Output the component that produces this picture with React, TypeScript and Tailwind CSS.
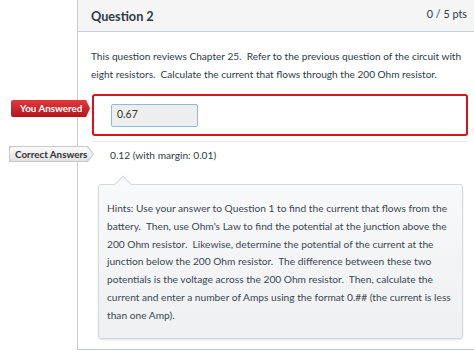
import React from "react";

export default function App() {
  return (
    <div className="w-[474px] h-[351px] overflow-hidden bg-white font-['Lato','Liberation_Sans',sans-serif] text-[#2d3b45]">
      <div className="ml-[77px] border-l border-b border-[#c7cdd1] pb-[10px]">
        <div className="h-[32px] bg-[#f5f5f5] border-b border-[#c7cdd1] flex items-start justify-between pl-[13px] pr-[7px]">
          <div className="text-[12.7px] font-bold leading-[32px] text-[#2d3b45]">Question 2</div>
          <div className="text-[10.8px] leading-[27px] text-[#2d3b45]">0 / 5 pts</div>
        </div>
        <div className="pt-[16px] pl-[13px] pr-0 text-[10.1px] leading-[17.5px] text-[#2d3b45]">
          This question reviews Chapter 25.&nbsp; Refer to the previous question of the circuit with eight resistors.&nbsp; Calculate the current that flows through the 200 Ohm resistor.
        </div>
        <div className="mt-[11px] mx-[14px] pb-[5px] border-b border-[#e3e8ee] w-[376px]">
          <div className="relative h-[42px] border-2 border-[#d7141d] rounded-[3px] flex items-center pl-[17px]">
            <div className="absolute left-[-83px] top-[4px] h-[17px] w-[79px] flex items-center pl-[9px] whitespace-nowrap bg-gradient-to-b from-[#e2383f] to-[#b3141b] text-white text-[9.8px] font-bold [clip-path:polygon(0_0,75px_0,79px_50%,75px_100%,0_100%)] rounded-l-[2px]">
              You Answered
            </div>
            <div className="w-[87px] h-[23px] bg-[#eeeeee] border border-[#8fb8e0] rounded-[2px] flex items-center pl-[5px] text-[10.5px] text-[#333]">
              0.67
            </div>
          </div>
        </div>
        <div className="relative h-[27px] flex items-center pl-[32px] text-[10.2px] text-[#2d3b45]">
          <div className="absolute left-[-69px] top-[4px] h-[16px] w-[85px] [clip-path:polygon(0_0,79px_0,85px_50%,79px_100%,0_100%)] bg-[#c9c9c9]">
            <div className="absolute inset-[1px] [clip-path:polygon(0_0,77px_0,83px_50%,77px_100%,0_100%)] bg-gradient-to-b from-[#fbfbfb] to-[#e2e2e2] flex items-center pl-[5px] whitespace-nowrap text-[9.8px] font-bold text-[#333] rounded-l-[2px]">
              Correct Answers
            </div>
          </div>
          0.12 (with margin: 0.01)
        </div>
        <div className="relative mt-[15px] ml-[20px] w-[365px] border border-[#d5d9dd] rounded-[3px] bg-gradient-to-b from-[#f8f9fa] to-[#eef0f2] shadow-[0_1px_2px_rgba(0,0,0,0.12)] pt-[15px] pb-[13px] pl-[8px] pr-[10px] text-[10.2px] leading-[17.8px] text-[#3b4750]">
          <div className="absolute left-[18px] top-[-7px] w-[12px] h-[12px] rotate-45 bg-[#f8f9fa] border-l border-t border-[#d5d9dd]"></div>
          <div className="relative">
            Hints: Use your answer to Question 1 to find the current that flows from the battery.&nbsp; Then, use Ohm's Law to find the potential at the junction above the 200 Ohm resistor.&nbsp; Likewise, determine the potential of the current at the junction below the 200 Ohm resistor.&nbsp; The difference between these two potentials is the voltage across the 200 Ohm resistor.&nbsp; Then, calculate the current and enter a number of Amps using the format 0.## (the current is less than one Amp).
          </div>
        </div>
      </div>
    </div>
  );
}
